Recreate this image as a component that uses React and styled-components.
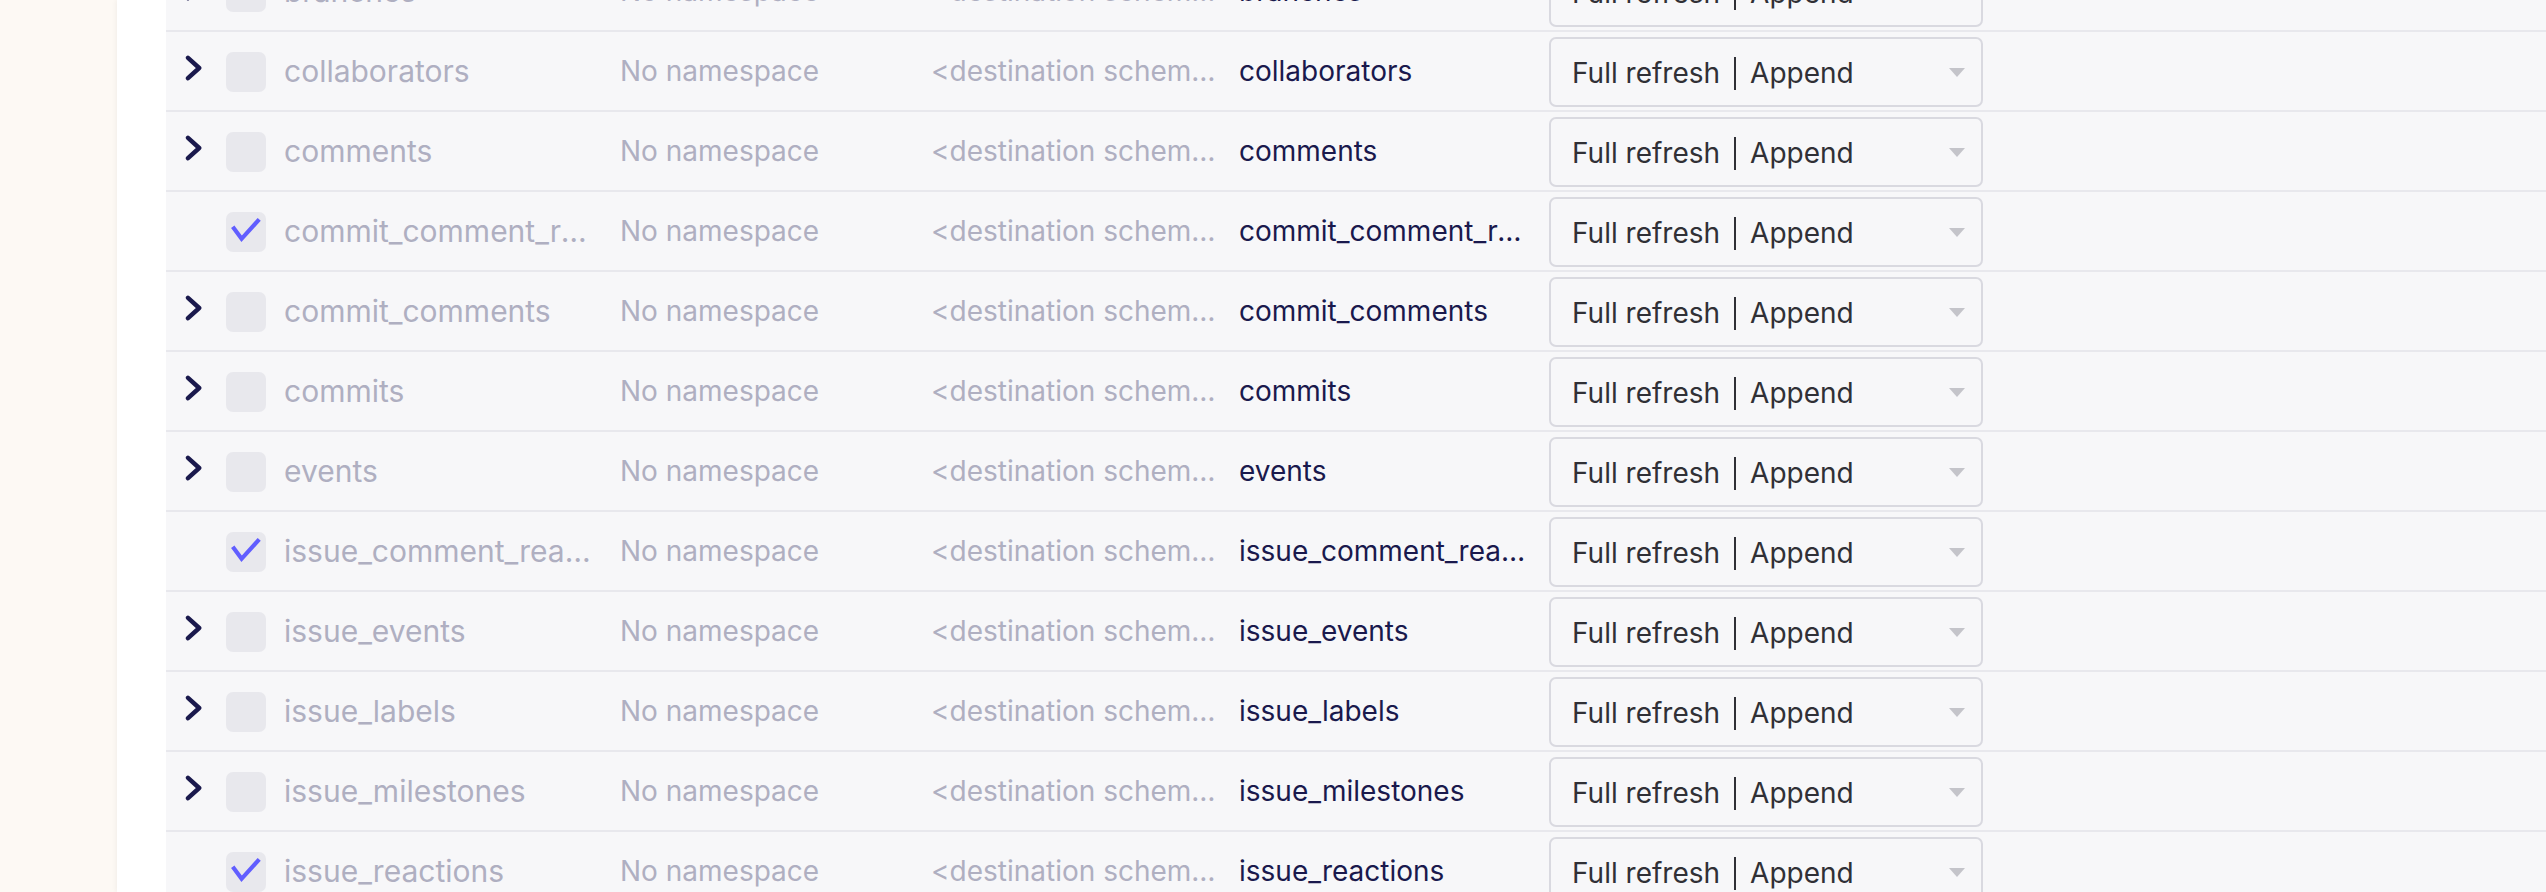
import React from 'react'
import styled, { createGlobalStyle } from 'styled-components'

const colors = {
  beige: '#fdf9f4',
  grey50: '#f7f7f9',
  grey100: '#e8e8ed',
  grey200: '#d9d9e0',
  grey300: '#afafc1',
  darkBlue: '#1a194d',
  blue: '#615eff',
  text: '#303036',
}

const GlobalStyle = createGlobalStyle`
  html, body {
    margin: 0;
    padding: 0;
    background: ${colors.beige};
    font-family: Inter, "Noto Sans", "Liberation Sans", sans-serif;
  }
  * { box-sizing: border-box; }
`

const streams = [
  { name: 'branches', expandable: true },
  { name: 'collaborators', expandable: true },
  { name: 'comments', expandable: true },
  { name: 'commit_comment_reactions', checked: true },
  { name: 'commit_comments', expandable: true },
  { name: 'commits', expandable: true },
  { name: 'events', expandable: true },
  { name: 'issue_comment_reactions', checked: true },
  { name: 'issue_events', expandable: true },
  { name: 'issue_labels', expandable: true },
  { name: 'issue_milestones', expandable: true },
  { name: 'issue_reactions', checked: true },
]

export default function App () {
  return (
    <Page>
      <GlobalStyle />
      <SidePanel />
      <Card>
        <Table>
          {streams.map((s) => (
            <Row key={s.name}>
              <ChevronCell>
                {s.expandable && (
                  <svg width='17' height='26' viewBox='0 0 17 26'>
                    <path d='M3 2.8 L14.2 13 L3 23.2' fill='none' stroke={colors.darkBlue}
                      strokeWidth='4.4' strokeLinecap='round' strokeLinejoin='round' />
                  </svg>
                )}
              </ChevronCell>
              <Checkbox>
                {s.checked && (
                  <svg width='40' height='40' viewBox='0 0 40 40'>
                    <path d='M8 16.5 L15.6 26.8 L31.8 9' fill='none' stroke={colors.blue}
                      strokeWidth='4.2' strokeLinecap='square' strokeLinejoin='miter' />
                  </svg>
                )}
              </Checkbox>
              <Cell width={336} size={30} muted>{s.name}</Cell>
              <Cell width={311} muted>No namespace</Cell>
              <Cell width={308} gap={18} muted>{'<destination schema>'}</Cell>
              <Cell width={310} gap={20}>{s.name}</Cell>
              <Dropdown>
                <span>Full refresh</span>
                <Divider />
                <span>Append</span>
                <Arrow />
              </Dropdown>
            </Row>
          ))}
        </Table>
      </Card>
    </Page>
  )
}

const Page = styled.div`
  display: flex;
  height: 892px;
  overflow: hidden;
`

const SidePanel = styled.div`
  width: 117px;
  flex-shrink: 0;
  background: ${colors.beige};
`

const Card = styled.div`
  flex: 1;
  background: #fff;
  padding-left: 49px;
  box-shadow: 0 0 6px rgba(0, 0, 0, 0.07);
  position: relative;
  overflow: hidden;
`

const Table = styled.div`
  background: ${colors.grey50};
  margin-top: -48px;
  min-height: 100%;
`

const Row = styled.div`
  display: flex;
  align-items: center;
  height: 80px;
  border-bottom: 2px solid ${colors.grey100};
  font-size: 28px;
`

const ChevronCell = styled.div`
  width: 60px;
  flex-shrink: 0;
  padding-left: 19px;
  display: flex;
  align-items: center;
  margin-bottom: 6px;
`

const Checkbox = styled.div`
  width: 40px;
  height: 40px;
  flex-shrink: 0;
  margin-right: 18px;
  margin-top: 2px;
  border-radius: 7px;
  background: ${colors.grey100};
  display: flex;
`

const Cell = styled.div`
  width: ${(p) => p.width}px;
  flex-shrink: 0;
  padding-right: ${(p) => p.gap || 26}px;
  font-size: ${(p) => p.size || 28}px;
  white-space: nowrap;
  overflow: hidden;
  text-overflow: ellipsis;
  color: ${(p) => (p.muted ? colors.grey300 : colors.darkBlue)};
`

const Dropdown = styled.div`
  width: 434px;
  height: 70px;
  flex-shrink: 0;
  margin-top: 2px;
  display: flex;
  align-items: center;
  padding: 2px 16px 0 21px;
  border: 2px solid ${colors.grey200};
  border-radius: 7px;
  background: ${colors.grey50};
  color: ${colors.text};
  white-space: nowrap;
`

const Divider = styled.span`
  width: 2px;
  height: 33px;
  margin: 0 14px;
  background: ${colors.text};
`

const Arrow = styled.span`
  margin-left: auto;
  margin-top: -2px;
  width: 0;
  height: 0;
  border-left: 8px solid transparent;
  border-right: 8px solid transparent;
  border-top: 9px solid #c4c4ca;
`
